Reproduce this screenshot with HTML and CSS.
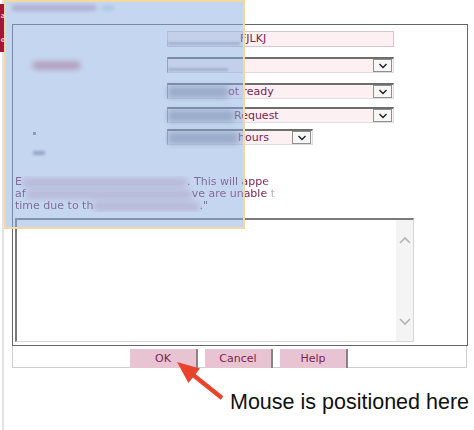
FILE: index.html
```html
<!DOCTYPE html>
<html>
<head>
<meta charset="utf-8">
<link rel="stylesheet" href="styles.css">
</head>
<body>
<div class="app">
  <div class="strip">
    <div class="strip-red"><span>a</span><span>e</span></div>
  </div>
  <div class="main">
    <div class="dialog">
      <div class="titlebar"><span class="blur title-blur"></span><span class="blur title-blur2"></span></div>
      <div class="panel">
        <div class="row r1">
          <div class="label"></div>
          <div class="field text wide"><span class="redact thin w72"></span><span class="val">FJLKJ</span></div>
        </div>
        <div class="row r2">
          <div class="label"><span class="blur red-label"></span></div>
          <div class="field select wide"><span class="redact thin w60"></span><span class="val"></span>
            <span class="dd"><svg viewBox="0 0 10 8" width="10" height="8"><path d="M1.5 2 L5 5.5 L8.5 2" fill="none" stroke="#222" stroke-width="1.4"/></svg></span></div>
        </div>
        <div class="row r3">
          <div class="label"></div>
          <div class="field select wide"><span class="redact w60"></span><span class="val">ot ready</span>
            <span class="dd"><svg viewBox="0 0 10 8" width="10" height="8"><path d="M1.5 2 L5 5.5 L8.5 2" fill="none" stroke="#222" stroke-width="1.4"/></svg></span></div>
        </div>
        <div class="row r4">
          <div class="label"></div>
          <div class="field select wide"><span class="redact w66"></span><span class="val">Request</span>
            <span class="dd"><svg viewBox="0 0 10 8" width="10" height="8"><path d="M1.5 2 L5 5.5 L8.5 2" fill="none" stroke="#222" stroke-width="1.4"/></svg></span></div>
        </div>
        <div class="row r5">
          <div class="label"><span class="blur dot-label"></span></div>
          <div class="field select narrow"><span class="redact w70"></span><span class="val">hours</span>
            <span class="dd"><svg viewBox="0 0 10 8" width="10" height="8"><path d="M1.5 2 L5 5.5 L8.5 2" fill="none" stroke="#222" stroke-width="1.4"/></svg></span></div>
        </div>
        <div class="mark-row"><span class="blur gray-mark"></span></div>
        <div class="note">
          <div class="line">E<span class="blur note-redact n1"></span>. This will appe</div>
          <div class="line">af<span class="blur note-redact n2"></span>ve are unable t</div>
          <div class="line">time due to th<span class="blur note-redact n3"></span>."</div>
        </div>
        <div class="textarea">
          <div class="ta-body"></div>
          <div class="scroll">
            <svg viewBox="0 0 14 10" width="14" height="10"><path d="M2 8 L7 3 L12 8" fill="none" stroke="#b4b4b4" stroke-width="1.6"/></svg>
            <svg viewBox="0 0 14 10" width="14" height="10"><path d="M2 2 L7 7 L12 2" fill="none" stroke="#b4b4b4" stroke-width="1.6"/></svg>
          </div>
        </div>
      </div>
      <div class="buttons">
        <div class="btn">OK</div>
        <div class="btn">Cancel</div>
        <div class="btn">Help</div>
      </div>
    </div>
    <div class="annotation">Mouse is positioned here</div>
  </div>
</div>
<div class="overlay"></div>
<svg class="arrow" viewBox="0 0 474 430" width="474" height="430">
  <line x1="222" y1="398" x2="192" y2="374" stroke="#e8432d" stroke-width="4.5" stroke-linecap="butt"/>
  <polygon points="177,362 200,368.5 188.5,383" fill="#e8432d"/>
</svg>
</body>
</html>
```
FILE: styles.css
```css
html, body {
  margin: 0;
  padding: 0;
}
body {
  width: 474px;
  height: 430px;
  overflow: hidden;
  position: relative;
  background: #ffffff;
  font-family: "DejaVu Sans", Verdana, sans-serif;
  font-size: 11px;
  color: #7b2350;
}
.app {
  display: flex;
  height: 430px;
}
.strip {
  width: 6px;
  display: flex;
  flex-direction: column;
  background: linear-gradient(to right, #ffffff 0 2px, #e2e2e2 2px 4px, #ffffff 4px);
}
.strip-red {
  margin-top: 4px;
  height: 48px;
  background: #a3163a;
  display: flex;
  flex-direction: column;
  justify-content: space-around;
  align-items: center;
}
.strip-red span {
  color: #ffffff;
  font-size: 7px;
  line-height: 8px;
}
.main {
  width: 468px;
  display: flex;
  flex-direction: column;
}
.dialog {
  margin-left: 6px;
  width: 456px;
}
.titlebar {
  height: 24px;
  display: flex;
  align-items: flex-start;
  gap: 6px;
}
.blur {
  display: inline-block;
  filter: blur(2px);
}
.title-blur {
  margin-top: 5px;
  width: 84px;
  height: 6px;
  background: rgba(150, 70, 120, 0.45);
}
.title-blur2 {
  margin-top: 6px;
  width: 12px;
  height: 4px;
  background: rgba(90, 140, 200, 0.4);
}
.panel {
  border: 1px solid #666666;
  padding: 6px 0 3px 0;
  background: #ffffff;
}
.row {
  display: flex;
  height: 16px;
}
.r2, .r3 { margin-top: 10px; }
.r4 { margin-top: 8px; }
.r5 { margin-top: 6px; }
.label {
  width: 154px;
  padding-left: 20px;
  box-sizing: border-box;
  display: flex;
  align-items: center;
}
.red-label {
  width: 47px;
  height: 7px;
  background: rgba(190, 60, 80, 0.7);
  filter: blur(3px);
}
.dot-label {
  width: 3px;
  height: 3px;
  margin-top: -8px;
  background: rgba(60, 70, 90, 0.6);
  filter: blur(0.5px);
}
.field {
  position: relative;
  height: 16px;
  box-sizing: border-box;
  background: #fcf0f2;
  display: flex;
  align-items: center;
  white-space: nowrap;
  line-height: 14px;
}
.wide { width: 227px; }
.narrow { width: 146px; }
.field.text {
  border: 1px solid #dcc5cc;
}
.field.select {
  border-top: 2px solid #6d6d6d;
  border-left: 1px solid #9a9a9a;
  border-right: 1px solid #dddddd;
  border-bottom: 1px solid #dddddd;
}
.redact {
  display: inline-block;
  height: 12px;
  background: rgba(95, 105, 125, 0.55);
  filter: blur(3px);
}
.redact.thin {
  height: 3px;
  align-self: flex-end;
  margin-bottom: 1px;
  background: rgba(95, 105, 125, 0.45);
  filter: blur(1px);
}
.w60 { width: 60px; }
.w66 { width: 66px; }
.w70 { width: 70px; }
.w72 { width: 72px; }
.val {
  flex: 1;
}
.dd {
  width: 19px;
  height: 13px;
  margin-right: 1px;
  box-sizing: border-box;
  border: 1px solid #8f8f8f;
  background: #f7f7f7;
  display: flex;
  align-items: center;
  justify-content: center;
}
.mark-row {
  height: 10px;
  padding-left: 20px;
}
.gray-mark {
  margin-top: 3px;
  width: 12px;
  height: 4px;
  background: rgba(60, 70, 90, 0.55);
  filter: blur(1.5px);
}
.note {
  margin-top: 21px;
  width: 262px;
  padding-left: 2px;
  white-space: nowrap;
  line-height: 12px;
  -webkit-mask-image: linear-gradient(to right, #000 250px, rgba(0,0,0,0.25) 262px);
  mask-image: linear-gradient(to right, #000 250px, rgba(0,0,0,0.25) 262px);
}
.line {
  height: 12px;
}
.note-redact {
  height: 9px;
  vertical-align: middle;
  background: rgba(190, 110, 140, 0.45);
  filter: blur(3px);
}
.n1 { width: 165px; }
.n2 { width: 166px; }
.n3 { width: 106px; }
.textarea {
  margin-top: 6px;
  margin-left: 2px;
  width: 399px;
  height: 124px;
  box-sizing: border-box;
  border-top: 2px solid #7a7a7a;
  border-left: 2px solid #7a7a7a;
  border-right: 1px solid #d6d6d6;
  border-bottom: 1px solid #d6d6d6;
  display: flex;
}
.ta-body {
  flex: 1;
  background: #ffffff;
}
.scroll {
  width: 17px;
  background: #f4f4f4;
  display: flex;
  flex-direction: column;
  align-items: center;
  justify-content: space-between;
  padding: 15px 0 14px 0;
}
.buttons {
  height: 22px;
  width: 455px;
  box-sizing: border-box;
  border-left: 1px solid #cfcfcf;
  border-right: 1px solid #cfcfcf;
  border-bottom: 1px solid #cfcfcf;
  padding: 3px 0 0 117px;
  display: flex;
  gap: 7px;
}
.btn {
  width: 68px;
  height: 19px;
  box-sizing: border-box;
  background: #e8c4d3;
  border-right: 2px solid #858585;
  color: #7b2350;
  display: flex;
  align-items: center;
  justify-content: center;
  font-size: 11px;
}
.annotation {
  margin-top: 22px;
  margin-left: 224px;
  font-family: "Liberation Sans", Arial, sans-serif;
  font-size: 21.5px;
  color: #111111;
  white-space: nowrap;
}
.overlay {
  position: absolute;
  left: 4px;
  top: 0;
  width: 237px;
  height: 225px;
  border: 2px solid #f4d8a4;
  background: rgba(140, 175, 225, 0.5);
}
.arrow {
  position: absolute;
  left: 0;
  top: 0;
  pointer-events: none;
}
```
